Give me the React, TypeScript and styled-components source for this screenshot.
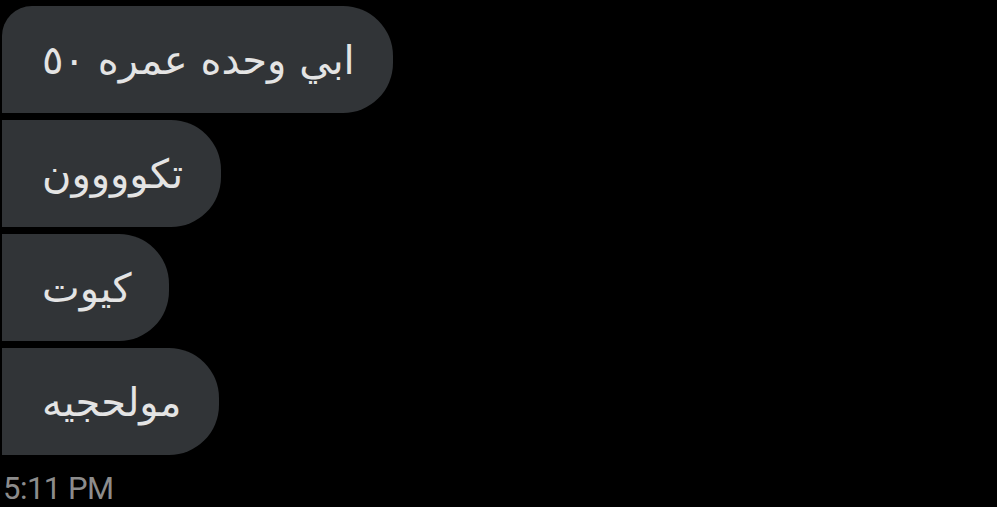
import React from 'react';
import styled, { createGlobalStyle } from 'styled-components';

const GlobalStyle = createGlobalStyle`
  html, body {
    margin: 0;
    padding: 0;
    background: #000;
  }
`;

const Thread = styled.div`
  display: flex;
  flex-direction: column;
  align-items: flex-start;
  gap: 7px;
  padding: 6px 0 0 2px;
  width: 997px;
  height: 507px;
  box-sizing: border-box;
  background: #000;
`;

const Bubble = styled.div<{ $first?: boolean }>`
  display: flex;
  align-items: center;
  justify-content: center;
  height: 107px;
  padding: 0 38px 0 40px;
  box-sizing: border-box;
  background: #313437;
  color: #e4e4e4;
  font-family: "DejaVu Sans", "Noto Sans", sans-serif;
  font-size: 40px;
  direction: rtl;
  border-radius: ${(p) => (p.$first ? '30px' : '0')} 50px 50px 0;
`;

const Time = styled.div`
  margin-top: 8px;
  padding-left: 1px;
  font-family: Roboto, "Liberation Sans", sans-serif;
  font-size: 31px;
  color: #8c8c8c;
  letter-spacing: -0.5px;
`;

const messages = ['ابي وحده عمره ٥٠', 'تكوووون', 'كيوت', 'مولحجيه'];

const App: React.FC = () => {
  return (
    <>
      <GlobalStyle />
      <Thread>
        {messages.map((m, i) => (
          <Bubble key={i} $first={i === 0}>
            {m}
          </Bubble>
        ))}
        <Time>5:11 PM</Time>
      </Thread>
    </>
  );
};

export default App;
